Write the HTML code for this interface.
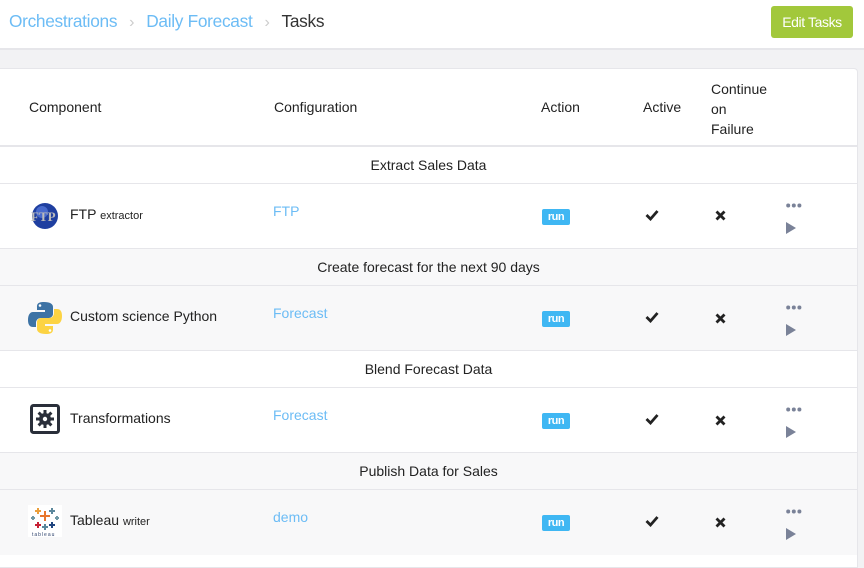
<!DOCTYPE html>
<html><head><style>
*{margin:0;padding:0;box-sizing:border-box}
body{width:864px;height:562px;overflow:hidden;background:#f2f2f4;font-family:"Liberation Sans",sans-serif;color:#222;position:relative}
.hdr{position:absolute;left:0;top:0;width:864px;height:50px;background:#fff;border-bottom:2px solid #e6e6ea}
.bc{position:absolute;left:9px;top:11px;font-size:17.3px;color:#6cbcf5;letter-spacing:-0.3px}
.bc .s{color:#ccc;margin:0 12px;font-size:16px}
.bc .t{color:#333}
.btn{position:absolute;left:771px;top:6px;width:82px;height:32px;background:#a2c83b;border-radius:3px;color:#fff;font-size:14px;text-align:center;line-height:32px;letter-spacing:-0.4px}
.card{position:absolute;left:0;top:68px;width:858px;height:500px;background:#fff;border:1px solid #e6e6ea;border-left:none;border-radius:0 4px 0 0}
.r{position:absolute;left:0;width:857px;border-bottom:1px solid #e6e6ea}
.g{text-align:center;font-size:14px;line-height:36px}
.gray{background:#f8f8f9}
.t14{position:absolute;font-size:14px}
.link{color:#6cbcf5}
.run{position:absolute;left:542px;width:28px;height:16px;background:#3fb7f3;color:#fff;border-radius:2px;font-size:11px;font-weight:bold;text-align:center;line-height:16px;letter-spacing:-0.5px}
.sm{font-size:11px}
.ic{position:absolute}
.play{position:absolute;left:786px;width:0;height:0;border-left:10px solid #7a8298;border-top:6px solid transparent;border-bottom:6px solid transparent}
</style></head><body>
<div class="hdr">
<div class="bc">Orchestrations<span class="s">›</span>Daily Forecast<span class="s">›</span><span class="t">Tasks</span></div>
<div class="btn">Edit Tasks</div>
</div>
<div class="card"></div>
<div class="t14" style="left:29px;top:99px">Component</div>
<div class="t14" style="left:274px;top:99px">Configuration</div>
<div class="t14" style="left:541px;top:99px">Action</div>
<div class="t14" style="left:643px;top:99px">Active</div>
<div class="t14" style="left:711px;top:79px;line-height:20px">Continue<br>on<br>Failure</div>
<div class="r" style="top:145px;height:2px;border-bottom:2px solid #e6e6ea"></div>

<div class="r g" style="top:147px;height:37px">Extract Sales Data</div>
<div class="r" style="top:184px;height:65px"></div>
<div class="r g gray" style="top:249px;height:37px">Create forecast for the next 90 days</div>
<div class="r gray" style="top:286px;height:65px"></div>
<div class="r g" style="top:351px;height:37px">Blend Forecast Data</div>
<div class="r" style="top:388px;height:65px"></div>
<div class="r g gray" style="top:453px;height:37px">Publish Data for Sales</div>
<div class="r gray" style="top:490px;height:65px;border-bottom:none"></div>

<svg style="position:absolute;left:28px;top:201px" width="34" height="30"><circle cx="17" cy="15" r="13" fill="#1f3fa0"/><circle cx="14" cy="11" r="6" fill="#5a7de0" opacity=".7"/><text x="3" y="20" font-family="Liberation Serif" font-weight="bold" font-size="13" fill="#bbb">FTP</text></svg>
<div class="t14" style="left:70px;top:206px">FTP <span class="sm">extractor</span></div>
<div class="t14 link" style="left:273px;top:203px">FTP</div>
<div class="run" style="top:209px">run</div>
<svg style="position:absolute;left:28px;top:301px" width="34" height="34" viewBox="0 0 34 34"><path d="M16 1c-7 0-7 3-7 5v3h8v2H5c-3 0-5 3-5 8s2 7 5 7h3v-4c0-3 2-5 5-5h8c2 0 4-2 4-4V6c0-3-3-5-9-5z" fill="#3d73a5"/><path d="M18 33c7 0 7-3 7-5v-3h-8v-2h12c3 0 5-3 5-8s-2-7-5-7h-3v4c0 3-2 5-5 5h-8c-2 0-4 2-4 4v7c0 3 3 5 9 5z" fill="#fcd343"/><circle cx="12" cy="4.5" r="1.3" fill="#fff"/><circle cx="22" cy="29.5" r="1.3" fill="#fff"/></svg>
<div class="t14" style="left:70px;top:308px">Custom science Python</div>
<div class="t14 link" style="left:273px;top:305px">Forecast</div>
<div class="run" style="top:311px">run</div>
<svg style="position:absolute;left:30px;top:404px" width="30" height="30"><rect x="1.5" y="1.5" width="27" height="27" rx="2" fill="#fff" stroke="#2a2f3a" stroke-width="3"/><circle cx="15" cy="15" r="6" fill="#2a2f3a"/><g stroke="#2a2f3a" stroke-width="3"><line x1="15" y1="6" x2="15" y2="24"/><line x1="6" y1="15" x2="24" y2="15"/><line x1="8.6" y1="8.6" x2="21.4" y2="21.4"/><line x1="21.4" y1="8.6" x2="8.6" y2="21.4"/></g><circle cx="15" cy="15" r="2.2" fill="#fff"/></svg>
<div class="t14" style="left:70px;top:410px">Transformations</div>
<div class="t14 link" style="left:273px;top:407px">Forecast</div>
<div class="run" style="top:413px">run</div>
<svg style="position:absolute;left:28px;top:505px" width="34" height="32"><rect width="34" height="32" fill="#fff"/><g stroke-width="2"><path d="M17 6v10M12 11h10" stroke="#e8762c"/><path d="M10 3v6M7 6h6" stroke="#eb9f3c"/><path d="M24 3v6M21 6h6" stroke="#5b879b"/><path d="M10 17v6M7 20h6" stroke="#c72035"/><path d="M24 17v6M21 20h6" stroke="#1f447e"/><path d="M17 19v6M14 22h6" stroke="#59879b"/><path d="M5 11v4M3 13h4M29 11v4M27 13h4" stroke="#7099a6"/></g><text x="4" y="31" font-size="5" fill="#2a3f6a" letter-spacing="1">tableau</text></svg>
<div class="t14" style="left:70px;top:512px">Tableau <span class="sm">writer</span></div>
<div class="t14 link" style="left:273px;top:509px">demo</div>
<div class="run" style="top:515px">run</div>

<svg class="ic" style="left:645px;top:209px" width="14" height="12"><path d="M1.5 6l4 4L12.5 2" fill="none" stroke="#222" stroke-width="2.8"/></svg>
<svg class="ic" style="left:715px;top:210px" width="11" height="11"><path d="M1.5 1.5l8 8M9.5 1.5l-8 8" stroke="#222" stroke-width="2.8"/></svg>
<svg class="ic" style="left:786px;top:203px" width="16" height="5"><circle cx="2.2" cy="2.5" r="2" fill="#7a8298"/><circle cx="7.8" cy="2.5" r="2" fill="#7a8298"/><circle cx="13.4" cy="2.5" r="2" fill="#7a8298"/></svg>
<div class="play" style="top:222px"></div>

<svg class="ic" style="left:645px;top:311px" width="14" height="12"><path d="M1.5 6l4 4L12.5 2" fill="none" stroke="#222" stroke-width="2.8"/></svg>
<svg class="ic" style="left:715px;top:313px" width="11" height="11"><path d="M1.5 1.5l8 8M9.5 1.5l-8 8" stroke="#222" stroke-width="2.8"/></svg>
<svg class="ic" style="left:786px;top:305px" width="16" height="5"><circle cx="2.2" cy="2.5" r="2" fill="#7a8298"/><circle cx="7.8" cy="2.5" r="2" fill="#7a8298"/><circle cx="13.4" cy="2.5" r="2" fill="#7a8298"/></svg>
<div class="play" style="top:324px"></div>

<svg class="ic" style="left:645px;top:413px" width="14" height="12"><path d="M1.5 6l4 4L12.5 2" fill="none" stroke="#222" stroke-width="2.8"/></svg>
<svg class="ic" style="left:715px;top:415px" width="11" height="11"><path d="M1.5 1.5l8 8M9.5 1.5l-8 8" stroke="#222" stroke-width="2.8"/></svg>
<svg class="ic" style="left:786px;top:407px" width="16" height="5"><circle cx="2.2" cy="2.5" r="2" fill="#7a8298"/><circle cx="7.8" cy="2.5" r="2" fill="#7a8298"/><circle cx="13.4" cy="2.5" r="2" fill="#7a8298"/></svg>
<div class="play" style="top:426px"></div>

<svg class="ic" style="left:645px;top:515px" width="14" height="12"><path d="M1.5 6l4 4L12.5 2" fill="none" stroke="#222" stroke-width="2.8"/></svg>
<svg class="ic" style="left:715px;top:517px" width="11" height="11"><path d="M1.5 1.5l8 8M9.5 1.5l-8 8" stroke="#222" stroke-width="2.8"/></svg>
<svg class="ic" style="left:786px;top:509px" width="16" height="5"><circle cx="2.2" cy="2.5" r="2" fill="#7a8298"/><circle cx="7.8" cy="2.5" r="2" fill="#7a8298"/><circle cx="13.4" cy="2.5" r="2" fill="#7a8298"/></svg>
<div class="play" style="top:528px"></div>
</body></html>
